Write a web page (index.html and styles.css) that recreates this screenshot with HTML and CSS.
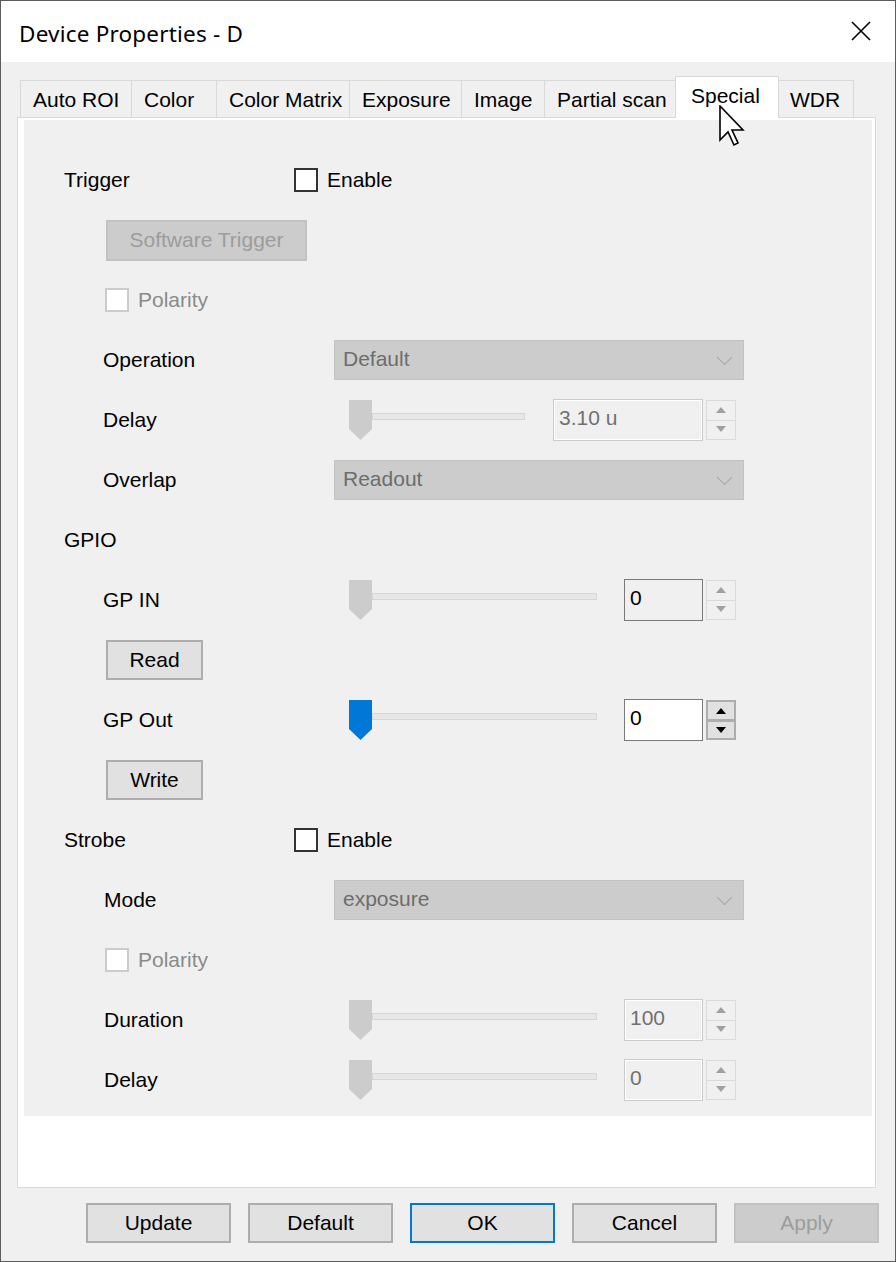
FILE: index.html
```html
<!DOCTYPE html>
<html lang="en">
<head>
    <meta charset="UTF-8">
    <title>Device Properties - D</title>
    <link rel="stylesheet" href="styles.css">
</head>
<body>
    <div class="window">
        <!-- Title bar -->
        <div class="titlebar">
            <span class="title">Device Properties - D</span>
            <svg class="close" width="20" height="20" viewBox="0 0 20 20">
                <path d="M1 1 L19 19 M19 1 L1 19" stroke="#000" stroke-width="1.6" fill="none"/>
            </svg>
        </div>

        <div class="client">
            <!-- Tabs -->
            <div class="tabs">
                <div class="tab w-auto">Auto ROI</div>
                <div class="tab w-color">Color</div>
                <div class="tab w-matrix">Color Matrix</div>
                <div class="tab w-exposure">Exposure</div>
                <div class="tab w-image">Image</div>
                <div class="tab w-partial">Partial scan</div>
                <div class="tab selected">Special</div>
                <div class="tab w-wdr">WDR</div>
            </div>

            <div class="panel">
                <div class="page">
                    <!-- Trigger -->
                    <div class="row l0">
                        <span class="lbl">Trigger</span>
                        <label class="check"><span class="box"></span>Enable</label>
                    </div>
                    <div class="row btn-row">
                        <button class="btn disabled wide">Software Trigger</button>
                    </div>
                    <div class="row cb-row">
                        <label class="check off"><span class="box"></span>Polarity</label>
                    </div>
                    <div class="row l1">
                        <span class="lbl">Operation</span>
                        <div class="combo">Default<span class="chev"></span></div>
                    </div>
                    <div class="row l1">
                        <span class="lbl">Delay</span>
                        <div class="slider short">
                            <svg class="thumb" width="23" height="40" viewBox="0 0 23 40"><polygon points="0,0 23,0 23,29 11.5,40 0,29" fill="#cccccc"/></svg>
                            <div class="track"></div>
                        </div>
                        <div class="num off wide">3.10 u</div>
                        <div class="spin off"><span class="up"></span><span class="down"></span></div>
                    </div>
                    <div class="row l1">
                        <span class="lbl">Overlap</span>
                        <div class="combo">Readout<span class="chev"></span></div>
                    </div>

                    <!-- GPIO -->
                    <div class="row l0">
                        <span class="lbl">GPIO</span>
                    </div>
                    <div class="row l1">
                        <span class="lbl">GP IN</span>
                        <div class="slider">
                            <svg class="thumb" width="23" height="40" viewBox="0 0 23 40"><polygon points="0,0 23,0 23,29 11.5,40 0,29" fill="#cccccc"/></svg>
                            <div class="track"></div>
                        </div>
                        <div class="num ro">0</div>
                        <div class="spin off"><span class="up"></span><span class="down"></span></div>
                    </div>
                    <div class="row btn-row">
                        <button class="btn small">Read</button>
                    </div>
                    <div class="row l1">
                        <span class="lbl">GP Out</span>
                        <div class="slider">
                            <svg class="thumb" width="23" height="40" viewBox="0 0 23 40"><polygon points="0,0 23,0 23,29 11.5,40 0,29" fill="#0078d7"/></svg>
                            <div class="track"></div>
                        </div>
                        <div class="num on">0</div>
                        <div class="spin on"><span class="up"></span><span class="down"></span></div>
                    </div>
                    <div class="row btn-row">
                        <button class="btn small">Write</button>
                    </div>

                    <!-- Strobe -->
                    <div class="row l0">
                        <span class="lbl">Strobe</span>
                        <label class="check"><span class="box"></span>Enable</label>
                    </div>
                    <div class="row l1 l1b">
                        <span class="lbl">Mode</span>
                        <div class="combo">exposure<span class="chev"></span></div>
                    </div>
                    <div class="row cb-row">
                        <label class="check off"><span class="box"></span>Polarity</label>
                    </div>
                    <div class="row l1 l1b">
                        <span class="lbl">Duration</span>
                        <div class="slider">
                            <svg class="thumb" width="23" height="40" viewBox="0 0 23 40"><polygon points="0,0 23,0 23,29 11.5,40 0,29" fill="#cccccc"/></svg>
                            <div class="track"></div>
                        </div>
                        <div class="num off">100</div>
                        <div class="spin off"><span class="up"></span><span class="down"></span></div>
                    </div>
                    <div class="row l1 l1b">
                        <span class="lbl">Delay</span>
                        <div class="slider">
                            <svg class="thumb" width="23" height="40" viewBox="0 0 23 40"><polygon points="0,0 23,0 23,29 11.5,40 0,29" fill="#cccccc"/></svg>
                            <div class="track"></div>
                        </div>
                        <div class="num off">0</div>
                        <div class="spin off"><span class="up"></span><span class="down"></span></div>
                    </div>
                </div>
            </div>

            <!-- Dialog buttons -->
            <div class="buttons">
                <button class="btn dlg">Update</button>
                <button class="btn dlg">Default</button>
                <button class="btn dlg default">OK</button>
                <button class="btn dlg">Cancel</button>
                <button class="btn dlg disabled">Apply</button>
            </div>
        </div>

        <!-- mouse pointer over the Special tab -->
        <svg class="cursor" width="26" height="42" viewBox="0 0 26 42">
            <polygon points="1,1 1,35 9,27 15,40 19,38 13,25 24,25" fill="#fff" stroke="#000" stroke-width="1.6" stroke-linejoin="miter"/>
        </svg>
    </div>
</body>
</html>
```

FILE: styles.css
```css
/* Dialog window */
html, body {
    margin: 0;
    padding: 0;
}
body {
    font-family: "Liberation Sans", Arial, sans-serif;
    font-size: 21px;
    color: #000;
}
.window {
    position: relative;
    width: 894px;
    height: 1260px;
    border: 1px solid #5c5c5c;
    background: #f0f0f0;
    overflow: hidden;
}
.titlebar {
    height: 61px;
    background: #fff;
    display: flex;
    align-items: center;
    justify-content: space-between;
    padding: 0 24px 0 18px;
}
.title {
    font-family: "Noto Sans", "Open Sans", sans-serif;
    font-size: 22.5px;
    letter-spacing: 0.2px;
    margin-top: 3px;
}
.close {
    margin-top: -2px;
}

/* Tab strip */
.client {
    padding: 0 19px 0 16px;
}
.tabs {
    display: flex;
    align-items: flex-end;
    height: 41px;
    margin-top: 14px;
    padding-left: 3px;
}
.tab {
    box-sizing: border-box;
    height: 37px;
    border: 1px solid #d9d9d9;
    border-bottom: none;
    margin-right: -1px;
    padding: 7px 0 0 12px;
    background: #f0f0f0;
    white-space: nowrap;
}
.w-auto { width: 112px; }
.w-color { width: 86px; }
.w-matrix { width: 134px; }
.w-exposure { width: 113px; }
.w-image { width: 84px; }
.w-partial { width: 134px; }
.w-wdr { width: 77px; }
.tab.selected {
    position: relative;
    z-index: 1;
    width: 104px;
    height: 42px;
    margin: 0 -2px -1px -2px;
    padding: 7px 0 0 15px;
    background: #fff;
    border-color: #d9d9d9;
}

.panel {
    box-sizing: border-box;
    height: 1071px;
    background: #fff;
    border: 1px solid #d9d9d9;
    padding: 2px 3px 0 6px;
}
.page {
    background: #f0f0f0;
    height: 996px;
    padding-top: 30px;
    box-sizing: border-box;
}

/* Rows */
.row {
    height: 60px;
    display: flex;
    align-items: center;
}
.l0 { padding-left: 40px; }
.l0 .lbl { width: 230px; }
.l1 { padding-left: 79px; }
.l1b { padding-left: 80px; }
.l1 .lbl { width: 231px; }
.l1b .lbl { width: 230px; }
.btn-row { padding-left: 82px; }
.cb-row { padding-left: 81px; }

/* Checkbox */
.check {
    display: flex;
    align-items: center;
}
.check .box {
    box-sizing: border-box;
    width: 24px;
    height: 24px;
    border: 2px solid #333;
    background: #fff;
    margin-right: 9px;
}
.check.off {
    color: #8a8a8a;
}
.check.off .box {
    border-color: #cccccc;
}

/* Buttons */
.btn {
    box-sizing: border-box;
    height: 41px;
    font-family: "Liberation Sans", Arial, sans-serif;
    font-size: 21px;
    color: #000;
    background: #e1e1e1;
    border: 2px solid #adadad;
    padding: 0;
}
.btn.wide { width: 201px; }
.btn.small { width: 97px; height: 40px; }
.btn.disabled {
    background: #cccccc;
    border-color: #c2c2c2;
    color: #9c9c9c;
}
.btn.default {
    border-color: #0078d7;
}

/* Combo box */
.combo {
    position: relative;
    box-sizing: border-box;
    width: 410px;
    height: 40px;
    line-height: 36px;
    padding-left: 8px;
    background: #cccccc;
    border: 1px solid #c3c3c3;
    color: #6d6d6d;
}
.chev {
    position: absolute;
    right: 13px;
    top: 11px;
    width: 10px;
    height: 10px;
    border-right: 1px solid #a6a6a6;
    border-bottom: 1px solid #a6a6a6;
    transform: rotate(45deg);
}

/* Slider */
.slider {
    display: flex;
    width: 248px;
    height: 40px;
    margin-left: 15px;
}
.slider.short { width: 176px; }
.thumb {
    flex: none;
    display: block;
}
.track {
    flex: 1;
    box-sizing: border-box;
    height: 7px;
    margin-top: 13px;
    background: #e7e7e7;
    border: 1px solid #d6d6d6;
}

/* Numeric up/down */
.num {
    box-sizing: border-box;
    width: 79px;
    height: 42px;
    margin-left: 27px;
    padding-left: 5px;
    line-height: 36px;
    border: 1px solid #7a7a7a;
}
.num.wide {
    width: 150px;
    margin-left: 28px;
}
.num.ro {
    background: #f0f0f0;
}
.num.on {
    background: #fff;
}
.num.off {
    border-color: #cccccc;
    box-shadow: inset 0 0 0 1px #fff;
    color: #707070;
}
.spin {
    box-sizing: border-box;
    width: 30px;
    height: 40px;
    margin-left: 3px;
    display: flex;
    flex-direction: column;
}
.spin span {
    flex: 1;
    position: relative;
    border: 1px solid #dadada;
    background: #f0f0f0;
}
.spin span + span {
    border-top: none;
}
.spin span::after {
    content: "";
    position: absolute;
    left: 9px;
    top: 6px;
    border-left: 5px solid transparent;
    border-right: 5px solid transparent;
}
.spin .up::after {
    border-bottom: 6px solid #a0a0a0;
}
.spin .down::after {
    top: 5px;
    border-top: 6px solid #a0a0a0;
}
.spin.on span {
    border: 2px solid #adadad;
    background: #e1e1e1;
}
.spin.on span + span {
    border-top: 1px solid #adadad;
}
.spin.on span::after {
    left: 8px;
}
.spin.on .up::after {
    border-bottom-color: #000;
}
.spin.on .down::after {
    border-top-color: #000;
}

/* Dialog buttons */
.buttons {
    display: flex;
    gap: 17px;
    margin: 15px 0 0 69px;
}
.btn.dlg {
    width: 145px;
    height: 40px;
    flex: none;
}

.cursor {
    position: absolute;
    left: 718px;
    top: 104px;
    z-index: 2;
}
```
